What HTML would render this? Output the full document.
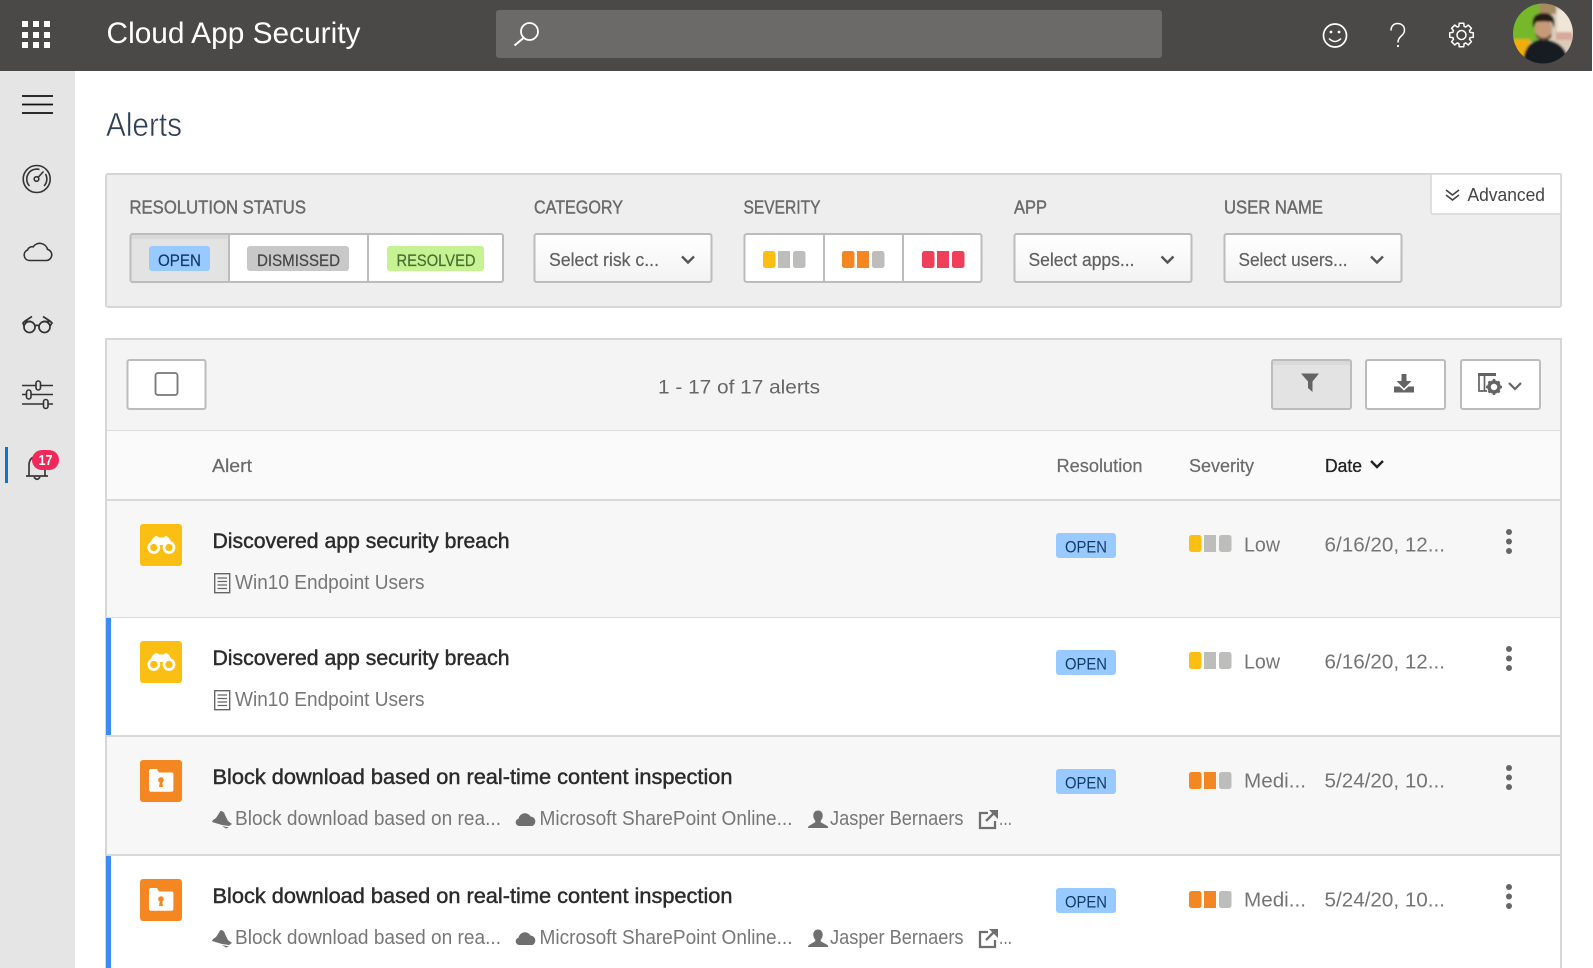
<!DOCTYPE html>
<html lang="en"><head><meta charset="utf-8"><title>Alerts - Cloud App Security</title>
<style>
html,body{margin:0;padding:0;background:#fff;overflow:hidden}
svg{display:block;font-family:"Liberation Sans",sans-serif}
.l{fill:#6a6a6a;font-size:18px;stroke:#6a6a6a;stroke-width:.4}
.d{fill:#606060;font-size:18px;stroke:#606060;stroke-width:.2}
.t{fill:#2b2b2b;font-size:21px;stroke:#2b2b2b;stroke-width:.45}
.s{fill:#777;font-size:20px}
.c{fill:#123a66;font-size:17px}
.h{fill:#6a6a6a;font-size:18px;stroke:#6a6a6a;stroke-width:.2}
.v{fill:#757575;font-size:20px}
.sh{fill:#fff;stroke:#bcbcbc;stroke-width:2}
</style></head><body>
<svg xmlns="http://www.w3.org/2000/svg" width="1593" height="968" viewBox="0 0 1593 968">
<defs>
<linearGradient id="dg" x1="0" y1="0" x2="0" y2="1"><stop offset="0" stop-color="#fff"/><stop offset="1" stop-color="#f3f3f3"/></linearGradient>
<filter id="bl" x="-10%" y="-10%" width="120%" height="120%"><feGaussianBlur stdDeviation="1"/></filter>
<clipPath id="av"><circle cx="1543" cy="33.500" r="30"/></clipPath>
<path id="chev" d="M-6-3.500 0 2.500 6-3.500" fill="none" stroke="#555" stroke-width="2.400"/>
<g id="bin"><path d="M10 21Q12 12.500 17 12L19 13.500H23.500L25.500 12Q30 12.500 32 21Z" fill="#fff"/><circle cx="13.800" cy="23.500" r="5" fill="#fbbf14" stroke="#fff" stroke-width="2.700"/><circle cx="29" cy="23.500" r="5" fill="#fbbf14" stroke="#fff" stroke-width="2.700"/></g>
<g id="fold"><rect width="42" height="42" rx="3" fill="#f58723"/><path d="M9 11a2 2 0 0 1 2-2h6l2 3.500h12.400a2 2 0 0 1 2 2v15.200a2 2 0 0 1-2 2H11a2 2 0 0 1-2-2Z" fill="#fff"/><circle cx="21" cy="20" r="2.800" fill="#f58723"/><path d="M20 21h2l1 6h-4Z" fill="#f58723"/></g>
<g id="doc"><rect x=".7" y=".7" width="15" height="19" fill="none" stroke="#666" stroke-width="1.400"/><path d="M3.500 5h9.500M3.500 8.500h9.500M3.500 12h9.500M3.500 15.500h9.500" stroke="#666" stroke-width="1.300"/></g>
<g id="sub">
<path d="M220.500 811Q224 811 225 815L228 821 232 824 229 826 222 825 212 822 213 820 216 818ZM222 826 229 827.500 226 828.500Z" fill="#6f6f6f"/>
<path d="M519.500 826a3.700 3.700 0 0 1-1-7.300 6.500 6.500 0 0 1 12-2.200 5 5 0 0 1 2 9.500Z" fill="#6f6f6f"/>
<path d="M818 810.500c3 0 4.700 2.200 4.700 5.200 0 2-.9 3.700-2 5v1.500l6.300 3.500c1 .6 1.200 1.300 1.200 2.300H808c0-1 .2-1.700 1.200-2.300l6.100-3.500v-1.500c-1.100-1.300-2-3-2-5 0-3 1.700-5.200 4.700-5.200Z" fill="#6f6f6f"/>
<path d="M988 813h-8v15h15v-7M986 821l8-8" fill="none" stroke="#6f6f6f" stroke-width="2.300"/><path d="M989 810h9v9Z" fill="#6f6f6f"/>
</g>
<g id="lowbar"><rect x="0" width="12.500" height="17" rx="2.500" fill="#fbbf14"/><rect x="15" width="12" height="17" fill="#bdbdbb"/><rect x="30" width="12.500" height="17" rx="2.500" fill="#bdbdbb"/></g>
<g id="medbar"><rect x="0" width="12.500" height="17" rx="2.500" fill="#f58723"/><rect x="15" width="12" height="17" fill="#f58723"/><rect x="30" width="12.500" height="17" rx="2.500" fill="#bdbdbb"/></g>
<g id="dots" fill="#666"><circle cx="0" cy="0" r="3"/><circle cx="0" cy="9.500" r="3"/><circle cx="0" cy="19" r="3"/></g>
</defs>

<!-- top bar -->
<rect width="1592" height="71" fill="#4a4947"/>
<g fill="#fff"><rect x="22" y="21" width="6" height="6"/><rect x="33" y="21" width="6" height="6"/><rect x="44" y="21" width="6" height="6"/><rect x="22" y="32" width="6" height="6"/><rect x="33" y="32" width="6" height="6"/><rect x="44" y="32" width="6" height="6"/><rect x="22" y="42" width="6" height="6"/><rect x="33" y="42" width="6" height="6"/><rect x="44" y="42" width="6" height="6"/></g>
<text x="106.500" y="43" font-size="29.500" fill="#fff" textLength="254" lengthAdjust="spacingAndGlyphs">Cloud App Security</text>
<rect x="496" y="10" width="666" height="48" rx="3" fill="#6b6a68"/>
<circle cx="529.500" cy="31.500" r="8.500" fill="none" stroke="#fff" stroke-width="1.800"/><path d="M523.500 38 514.500 45.500" stroke="#fff" stroke-width="2"/>
<circle cx="1335" cy="35.500" r="11.500" fill="none" stroke="#fff" stroke-width="1.700"/><circle cx="1331" cy="32" r="1.400" fill="#fff"/><circle cx="1339" cy="32" r="1.400" fill="#fff"/><path d="M1329 38.500q6 6 12 0" fill="none" stroke="#fff" stroke-width="1.500"/>
<path d="M1391 30.500C1391 26 1394 23.500 1397.500 23.500 1401.500 23.500 1404.500 26 1404.500 30 1404.500 36 1398 36 1398 42.500" fill="none" stroke="#fff" stroke-width="1.500"/><circle cx="1398" cy="46" r="1.100" fill="#fff"/>
<g transform="translate(1461.500 35)" fill="none" stroke="#fff" stroke-width="1.500" stroke-linejoin="round"><circle r="4.500"/><path d="M11.780-2.290 11.780 2.290 8.610 2.630 7.950 4.230 9.950 6.710 6.710 9.950 4.230 7.950 2.630 8.610 2.290 11.780-2.290 11.780-2.630 8.610-4.230 7.950-6.710 9.950-9.950 6.710-7.950 4.230-8.610 2.630-11.780 2.290-11.780-2.290-8.610-2.630-7.950-4.230-9.950-6.710-6.710-9.950-4.230-7.950-2.630-8.610-2.290-11.780 2.290-11.780 2.630-8.610 4.230-7.950 6.710-9.950 9.950-6.710 7.950-4.230 8.610-2.630Z"/></g>
<g clip-path="url(#av)"><g filter="url(#bl)">
<rect x="1510" y="0" width="70" height="70" fill="#dcccba"/>
<path d="M1510 0H1539V42H1510Z" fill="#76b82a"/>
<path d="M1510 39H1530V68H1510Z" fill="#efae0f"/>
<rect x="1539" y="2" width="17" height="12" fill="#a68a60"/>
<rect x="1557" y="10" width="16" height="24" fill="#efe6d8"/>
<rect x="1556" y="32" width="16" height="8" fill="#d8a89a"/>
<path d="M1523 66Q1523 46 1535 41L1543 38 1552 41Q1568 46 1569 66Z" fill="#171a20"/>
<ellipse cx="1543.500" cy="29" rx="8.500" ry="11" fill="#c79a78"/>
<path d="M1533 28Q1530 13 1544 13 1557 13 1554 28L1551.500 22Q1543 21 1536 22Z" fill="#261a14"/>
<path d="M1535 33Q1544 43 1552 33L1551 38 1544 41 1537 38Z" fill="#5a4130"/>
</g></g>

<!-- side nav -->
<rect y="71" width="75" height="897" fill="#e5e5e5"/>
<path d="M22 96h31M22 104.500h31M22 113h31" stroke="#111" stroke-width="1.700"/>
<g fill="none" stroke="#333" stroke-width="1.600"><circle cx="36.700" cy="179" r="13.500"/><path d="M29.500 186a10 10 0 0 1 10-16.500M45.500 174a10 10 0 0 1-1.500 12"/><circle cx="36.500" cy="179" r="2.300"/><path d="M38 177.500 43.500 171.500"/>
<path d="M29 260.500H46.500A5.700 5.700 0 0 0 47.500 249.300 8 8 0 0 0 33.200 246.800 5 5 0 0 0 27.500 250 5.500 5.500 0 0 0 29 260.500Z"/>
<g stroke-width="1.700"><circle cx="29.500" cy="327" r="5.500"/><circle cx="44.500" cy="327" r="5.500"/><path d="M35 326q2-1.500 4 0M24 326l-1-3 2-2 7-4.500M50 326l2-3-2-2-7-4.500M25 321.500h6M43 321.500h7"/></g>
<path d="M22 385.500h31M22 394.500h31M22 404h31"/></g>
<g fill="#e5e5e5" stroke="#333" stroke-width="1.600"><rect x="36" y="381" width="4.500" height="9" rx="2.200"/><rect x="26.500" y="390" width="4.500" height="9" rx="2.200"/><rect x="43.500" y="399.500" width="4.500" height="9" rx="2.200"/></g>
<rect x="5" y="447" width="3" height="36" fill="#0078d4"/>
<path d="M29 475.500v-10q0-8 7-9M45 466v9.500M26 476h22M34 477q3 4.500 6 0" fill="none" stroke="#3a3a3a" stroke-width="1.700"/>
<rect x="32" y="450" width="27" height="20" rx="10" fill="#ef2a5b"/>
<text x="38.500" y="465" font-size="15" font-weight="700" fill="#fff" textLength="14" lengthAdjust="spacingAndGlyphs">17</text>

<!-- heading -->
<text x="106" y="136" font-size="33" fill="#2f3f55" stroke="#fff" stroke-width=".55" textLength="76" lengthAdjust="spacingAndGlyphs">Alerts</text>

<!-- filter panel -->
<rect x="106" y="174" width="1455" height="133" rx="2" fill="#eee" stroke="#d6d6d6" stroke-width="2"/>
<path d="M1431 174h130v40h-128a2 2 0 0 1-2-2Z" fill="#fff" stroke="#d6d6d6" stroke-width="1.500"/>
<path d="M1446 190l6.500 5 6.500-5M1446 195l6.500 5 6.500-5" fill="none" stroke="#444" stroke-width="1.600"/>
<text x="1467.500" y="201" font-size="18.500" fill="#444" textLength="77.500" lengthAdjust="spacingAndGlyphs">Advanced</text>
<text class="l" x="129.500" y="213.500" textLength="176.500" lengthAdjust="spacingAndGlyphs">RESOLUTION STATUS</text>
<text class="l" x="534" y="213.500" textLength="89" lengthAdjust="spacingAndGlyphs">CATEGORY</text>
<text class="l" x="743.500" y="213.500" textLength="77" lengthAdjust="spacingAndGlyphs">SEVERITY</text>
<text class="l" x="1014" y="213.500" textLength="33" lengthAdjust="spacingAndGlyphs">APP</text>
<text class="l" x="1224" y="213.500" textLength="99" lengthAdjust="spacingAndGlyphs">USER NAME</text>

<rect x="130.500" y="234" width="372.500" height="48" rx="2" class="sh"/>
<rect x="131.500" y="235" width="97.500" height="46" fill="#e3e3e3"/><rect x="131.500" y="235" width="97.500" height="4" fill="#d9d9d9"/>
<path d="M229 234v48M368 234v48" stroke="#bcbcbc" stroke-width="2"/>
<rect x="149" y="246" width="61" height="25" rx="3" fill="#99caff"/>
<text x="158" y="266" font-size="17" fill="#123a66" stroke="#123a66" stroke-width=".2" textLength="43" lengthAdjust="spacingAndGlyphs">OPEN</text>
<rect x="247" y="246" width="102" height="25" rx="3" fill="#c8c8c8"/>
<text x="257" y="266" font-size="17" fill="#444" stroke="#444" stroke-width=".2" textLength="83" lengthAdjust="spacingAndGlyphs">DISMISSED</text>
<rect x="387" y="246" width="97" height="25" rx="3" fill="#c5f293"/>
<text x="396.500" y="266" font-size="17" fill="#4a6b30" stroke="#4a6b30" stroke-width=".2" textLength="79" lengthAdjust="spacingAndGlyphs">RESOLVED</text>

<rect x="534.500" y="234" width="177" height="48" rx="2" fill="url(#dg)" stroke="#bcbcbc" stroke-width="2"/>
<text class="d" x="549" y="266" textLength="110" lengthAdjust="spacingAndGlyphs">Select risk c...</text>
<use href="#chev" x="688" y="260"/>

<rect x="744.500" y="234" width="237" height="48" rx="2" class="sh"/>
<path d="M824 234v48M903 234v48" stroke="#bcbcbc" stroke-width="2"/>
<use href="#lowbar" x="763" y="251"/>
<use href="#medbar" x="842" y="251"/>
<g fill="#ef3f5a"><rect x="922" y="251" width="12.500" height="17" rx="2.500"/><rect x="937" y="251" width="12" height="17"/><rect x="952" y="251" width="12.500" height="17" rx="2.500"/></g>

<rect x="1014.500" y="234" width="177" height="48" rx="2" fill="url(#dg)" stroke="#bcbcbc" stroke-width="2"/>
<text class="d" x="1028.500" y="266" textLength="106" lengthAdjust="spacingAndGlyphs">Select apps...</text>
<use href="#chev" x="1167.500" y="260"/>
<rect x="1224.500" y="234" width="177" height="48" rx="2" fill="url(#dg)" stroke="#bcbcbc" stroke-width="2"/>
<text class="d" x="1238.500" y="266" textLength="109" lengthAdjust="spacingAndGlyphs">Select users...</text>
<use href="#chev" x="1377" y="260"/>

<!-- list panel -->
<rect x="106" y="339" width="1455" height="640" fill="#fff" stroke="#d6d6d6" stroke-width="2"/>
<rect x="107" y="340" width="1453" height="90" fill="#f4f4f4"/>
<rect x="107" y="431" width="1453" height="68" fill="#fafafa"/>
<path d="M106 430.500h1455" stroke="#dcdcdc"/>
<path d="M106 500h1455" stroke="#d8d8d8" stroke-width="2"/>
<rect x="107" y="501" width="1453" height="116" fill="#f7f7f7"/>
<path d="M106 617.500h1455" stroke="#dcdcdc"/>
<path d="M106 736h1455" stroke="#d8d8d8" stroke-width="2"/>
<rect x="107" y="737" width="1453" height="117" fill="#f7f7f7"/>
<path d="M106 855h1455" stroke="#d8d8d8" stroke-width="2"/>
<rect x="106" y="618" width="5" height="117" fill="#3b8cf5"/>
<rect x="106" y="856" width="5" height="112" fill="#3b8cf5"/>

<rect x="127.500" y="360" width="78" height="49" rx="2" class="sh"/>
<rect x="155.500" y="373" width="22" height="22" rx="2.500" fill="#fff" stroke="#777" stroke-width="1.800"/>
<text x="658" y="393.500" font-size="19.500" fill="#666" textLength="162" lengthAdjust="spacingAndGlyphs">1 - 17 of 17 alerts</text>
<rect x="1272" y="360" width="79" height="49" rx="2" fill="#e3e3e3" stroke="#bcbcbc" stroke-width="2"/><rect x="1273" y="361" width="77" height="4" fill="#d9d9d9"/>
<path d="M1301 373.500h18l-6.500 8v10.500l-4.500-4v-6.500Z" fill="#646464"/>
<rect x="1366" y="360" width="79" height="49" rx="2" class="sh"/>
<path d="M1401.500 374h5v7h5l-7.500 7.500-7.500-7.500h5Z" fill="#646464"/><path d="M1394 386.500h5.500l4.500 4 4.500-4h5.500v6h-20Z" fill="#646464"/>
<rect x="1461" y="360" width="79" height="49" rx="2" class="sh"/>
<g fill="none" stroke="#646464" stroke-width="1.700"><path d="M1490 375h-11v16h8M1484.500 375v16"/></g><rect x="1478" y="373" width="18" height="3" fill="#646464"/>
<circle cx="1494" cy="387" r="5" fill="none" stroke="#646464" stroke-width="3.500"/><path d="M1494 379v3M1494 392v3M1486 387h3M1499 387h3M1488.500 381.500l2 2M1497.500 390.500l2 2M1499.500 381.500l-2 2M1490.500 390.500l-2 2" stroke="#646464" stroke-width="2.500"/>
<path d="M1509 383l6 6 6-6" fill="none" stroke="#646464" stroke-width="2.200"/>

<text class="h" x="212" y="472" textLength="40" lengthAdjust="spacingAndGlyphs">Alert</text>
<text class="h" x="1056.500" y="472" textLength="86" lengthAdjust="spacingAndGlyphs">Resolution</text>
<text class="h" x="1189" y="472" textLength="65" lengthAdjust="spacingAndGlyphs">Severity</text>
<text x="1325" y="472" font-size="18" fill="#222" stroke="#222" stroke-width=".3" textLength="37" lengthAdjust="spacingAndGlyphs">Date</text>
<path d="M1371 461l6 6 6-6" fill="none" stroke="#222" stroke-width="2.400"/>

<!-- row 1 -->
<rect x="140" y="524" width="42" height="42" rx="3" fill="#fbbf14"/><use href="#bin" x="140" y="524"/>
<text class="t" x="212.500" y="548" textLength="297" lengthAdjust="spacingAndGlyphs">Discovered app security breach</text>
<use href="#doc" x="214" y="573"/>
<text class="s" x="235" y="589" textLength="189.500" lengthAdjust="spacingAndGlyphs">Win10 Endpoint Users</text>
<rect x="1056" y="533" width="60" height="25" rx="3" fill="#99caff"/>
<text class="c" x="1065" y="552.500" textLength="42" lengthAdjust="spacingAndGlyphs">OPEN</text>
<use href="#lowbar" x="1189" y="535"/>
<text class="v" x="1244" y="551.500" textLength="36" lengthAdjust="spacingAndGlyphs">Low</text>
<text class="v" x="1324.500" y="551.500" textLength="120.500" lengthAdjust="spacingAndGlyphs">6/16/20, 12...</text>
<use href="#dots" x="1509" y="532"/>

<!-- row 2 -->
<rect x="140" y="641" width="42" height="42" rx="3" fill="#fbbf14"/><use href="#bin" x="140" y="641"/>
<text class="t" x="212.500" y="665" textLength="297" lengthAdjust="spacingAndGlyphs">Discovered app security breach</text>
<use href="#doc" x="214" y="690"/>
<text class="s" x="235" y="706" textLength="189.500" lengthAdjust="spacingAndGlyphs">Win10 Endpoint Users</text>
<rect x="1056" y="650" width="60" height="25" rx="3" fill="#99caff"/>
<text class="c" x="1065" y="669.500" textLength="42" lengthAdjust="spacingAndGlyphs">OPEN</text>
<use href="#lowbar" x="1189" y="652"/>
<text class="v" x="1244" y="668.500" textLength="36" lengthAdjust="spacingAndGlyphs">Low</text>
<text class="v" x="1324.500" y="668.500" textLength="120.500" lengthAdjust="spacingAndGlyphs">6/16/20, 12...</text>
<use href="#dots" x="1509" y="649"/>

<!-- row 3 -->
<use href="#fold" x="140" y="760"/>
<text class="t" x="212.500" y="784" textLength="520" lengthAdjust="spacingAndGlyphs">Block download based on real-time content inspection</text>
<use href="#sub"/>
<text class="s" x="235" y="825" textLength="266" lengthAdjust="spacingAndGlyphs">Block download based on rea...</text>
<text class="s" x="539.500" y="825" textLength="253" lengthAdjust="spacingAndGlyphs">Microsoft SharePoint Online...</text>
<text class="s" x="830" y="825" textLength="133.500" lengthAdjust="spacingAndGlyphs">Jasper Bernaers</text>
<text class="s" x="999" y="825" textLength="13" lengthAdjust="spacingAndGlyphs">...</text>
<rect x="1056" y="769" width="60" height="25" rx="3" fill="#99caff"/>
<text class="c" x="1065" y="788.500" textLength="42" lengthAdjust="spacingAndGlyphs">OPEN</text>
<use href="#medbar" x="1189" y="772"/>
<text class="v" x="1244" y="787.500" textLength="62" lengthAdjust="spacingAndGlyphs">Medi...</text>
<text class="v" x="1324.500" y="787.500" textLength="120.500" lengthAdjust="spacingAndGlyphs">5/24/20, 10...</text>
<use href="#dots" x="1509" y="768"/>

<!-- row 4 -->
<use href="#fold" x="140" y="879"/>
<text class="t" x="212.500" y="903" textLength="520" lengthAdjust="spacingAndGlyphs">Block download based on real-time content inspection</text>
<use href="#sub" y="119"/>
<text class="s" x="235" y="944" textLength="266" lengthAdjust="spacingAndGlyphs">Block download based on rea...</text>
<text class="s" x="539.500" y="944" textLength="253" lengthAdjust="spacingAndGlyphs">Microsoft SharePoint Online...</text>
<text class="s" x="830" y="944" textLength="133.500" lengthAdjust="spacingAndGlyphs">Jasper Bernaers</text>
<text class="s" x="999" y="944" textLength="13" lengthAdjust="spacingAndGlyphs">...</text>
<rect x="1056" y="888" width="60" height="25" rx="3" fill="#99caff"/>
<text class="c" x="1065" y="907.500" textLength="42" lengthAdjust="spacingAndGlyphs">OPEN</text>
<use href="#medbar" x="1189" y="891"/>
<text class="v" x="1244" y="906.500" textLength="62" lengthAdjust="spacingAndGlyphs">Medi...</text>
<text class="v" x="1324.500" y="906.500" textLength="120.500" lengthAdjust="spacingAndGlyphs">5/24/20, 10...</text>
<use href="#dots" x="1509" y="887"/>
</svg>
</body></html>
